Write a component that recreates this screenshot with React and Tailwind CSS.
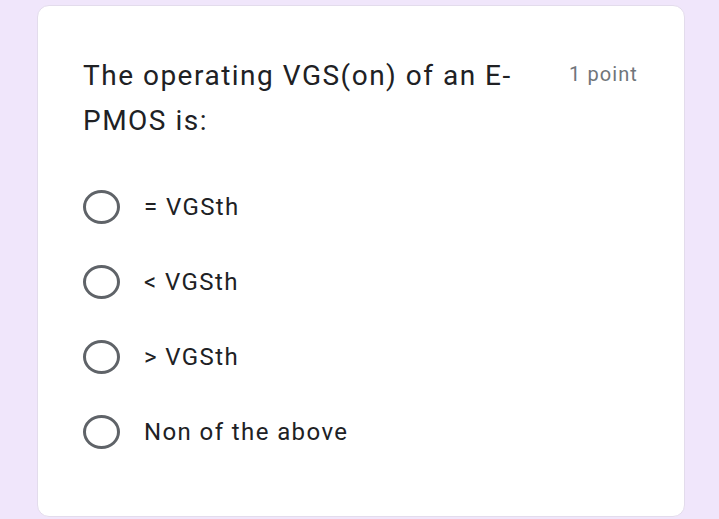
export default function App() {
  const options = ['= VGSth', '< VGSth', '> VGSth', 'Non of the above'];

  return (
    <div className="w-[719px] h-[519px] bg-[#f0e6fb] pt-[5px] pl-[37px] overflow-hidden" style={{ fontFamily: 'Roboto, "Liberation Sans", sans-serif' }}>
      <div className="w-[648px] h-[512px] bg-white rounded-[12px] border border-[#e3dcec] pt-[47px] pl-[45px] pr-[46px]">
        <div className="flex justify-between items-start">
          <h1 className="w-[470px] text-[28px] leading-[45px] tracking-[1.5px] text-[#202124] font-normal">
            The operating VGS(on) of an E-PMOS is:
          </h1>
          <span className="text-[20px] leading-[44px] tracking-[1.1px] text-[#70757a] mt-[-1px]">1 point</span>
        </div>
        <div className="mt-[26px] flex flex-col">
          {options.map((opt) => (
            <div key={opt} className="h-[75px] flex items-center">
              <span className="w-[37px] h-[34px] rounded-[50%] border-[3px] border-[#5f6368] shrink-0"></span>
              <span className="ml-[24px] text-[24px] tracking-[1.4px] text-[#202124]">{opt}</span>
            </div>
          ))}
        </div>
      </div>
    </div>
  );
}
